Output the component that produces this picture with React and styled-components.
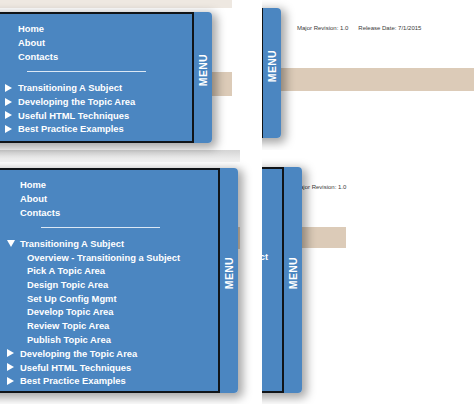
import styled, { createGlobalStyle } from 'styled-components'

const GlobalStyle = createGlobalStyle`
  html, body {
    margin: 0;
    padding: 0;
    background: #ffffff;
  }
  body {
    font-family: "Liberation Sans", Arial, sans-serif;
  }
`

const Canvas = styled.div`
  width: 474px;
  height: 404px;
  overflow: hidden;
  background: #ffffff;
  display: grid;
  grid-template-columns: 240px 22px 212px;
  grid-template-rows: 150px 254px;
  grid-template-areas:
    "a . b"
    "c . d";
`

const Shot = styled.div`
  grid-area: ${props => props.$area};
  position: relative;
  width: ${props => props.$width}px;
  overflow: ${props => (props.$clip ? 'hidden' : 'visible')};
`

const Page = styled.div`
  padding-top: ${props => props.$top || 0}px;
`

const Strip = styled.div`
  height: ${props => props.$h}px;
  background: ${props => props.$bg};
`

const Meta = styled.div`
  display: flex;
  gap: 10px;
  padding-left: ${props => props.$indent}px;
  font-size: 6px;
  line-height: 8px;
  color: #3a3a3a;
  white-space: nowrap;
`

const Band = styled.div`
  height: ${props => props.$h}px;
  margin-top: ${props => props.$gap}px;
  width: ${props => (props.$w ? `${props.$w}px` : '100%')};
  background: #dccbb8;
`

const Menu = styled.nav`
  position: absolute;
  z-index: 2;
  left: ${props => props.$left}px;
  top: ${props => props.$top}px;
  height: ${props => props.$h}px;
  display: flex;
  border-radius: 0 4px 4px 0;
  box-shadow: 3px 3px 10px 2px rgba(0, 0, 0, 0.35);
  font-family: "Liberation Sans", Arial, sans-serif;
  font-weight: bold;
  font-size: 9.4px;
  color: #ffffff;
`

const Panel = styled.div`
  box-sizing: border-box;
  width: ${props => props.$w}px;
  height: 100%;
  background: #4b86c1;
  border: 2px solid #101418;
  border-left: 0;
  padding-top: 8px;
  white-space: nowrap;
  overflow: hidden;
`

const Links = styled.ul`
  list-style: none;
  margin: 0;
  padding: 0 0 0 38px;
`

const Link = styled.li`
  height: 14px;
  line-height: 14px;
`

const Rule = styled.hr`
  width: 119px;
  height: 1px;
  margin: 7px auto 9px;
  border: 0;
  background: #dbe8f5;
`

const Tree = styled.ul`
  list-style: none;
  margin: 0;
  padding: 0 0 0 25px;
`

const BranchLabel = styled.div`
  display: flex;
  align-items: center;
  height: 13.7px;
`

const Caret = styled.span`
  width: 13px;
  display: flex;
  align-items: center;
`

const Leaves = styled.ul`
  list-style: none;
  margin: 0;
  padding: 0 0 0 20px;
`

const Leaf = styled.li`
  height: 13.7px;
  line-height: 13.7px;
`

const Tab = styled.div`
  box-sizing: border-box;
  width: 18px;
  height: 100%;
  background: #4b86c1;
  border-radius: 0 4px 4px 0;
  display: flex;
  align-items: center;
  justify-content: center;
  padding-bottom: 14px;
`

const TabLabel = styled.span`
  writing-mode: vertical-rl;
  transform: rotate(180deg);
  font-size: 10.5px;
  font-weight: bold;
  letter-spacing: 0.3px;
`

const sections = [
  {
    title: 'Transitioning A Subject',
    pages: [
      'Overview - Transitioning a Subject',
      'Pick A Topic Area',
      'Design Topic Area',
      'Set Up Config Mgmt',
      'Develop Topic Area',
      'Review Topic Area',
      'Publish Topic Area',
    ],
  },
  { title: 'Developing the Topic Area', pages: [] },
  { title: 'Useful HTML Techniques', pages: [] },
  { title: 'Best Practice Examples', pages: [] },
]

const Arrow = ({ open }) =>
  open ? (
    <svg width="8" height="7" viewBox="0 0 8 7">
      <polygon points="0,0 8,0 4,7" fill="#fff" />
    </svg>
  ) : (
    <svg width="7" height="8" viewBox="0 0 7 8">
      <polygon points="0,0 7,4 0,8" fill="#fff" />
    </svg>
  )

const SlideMenu = ({ left, top, height, width, expanded }) => (
  <Menu $left={left} $top={top} $h={height}>
    <Panel $w={width}>
      <Links>
        <Link>Home</Link>
        <Link>About</Link>
        <Link>Contacts</Link>
      </Links>
      <Rule />
      <Tree>
        {sections.map((section, i) => {
          const open = expanded && i === 0
          return (
            <li key={section.title}>
              <BranchLabel>
                <Caret>
                  <Arrow open={open} />
                </Caret>
                {section.title}
              </BranchLabel>
              {open && (
                <Leaves>
                  {section.pages.map(page => (
                    <Leaf key={page}>{page}</Leaf>
                  ))}
                </Leaves>
              )}
            </li>
          )
        })}
      </Tree>
    </Panel>
    <Tab>
      <TabLabel>MENU</TabLabel>
    </Tab>
  </Menu>
)

export default function App() {
  return (
    <>
      <GlobalStyle />
      <Canvas>
        <Shot $area="a" $width={232}>
          <Page>
            <Strip $h={8} $bg="#eee8e1" />
            <Band $h={24} $gap={64} />
          </Page>
          <SlideMenu left={-20} top={12} height={131} width={214} />
        </Shot>

        <Shot $area="b" $width={212} $clip>
          <Page $top={24}>
            <Meta $indent={35}>
              <span>Major Revision: 1.0</span>
              <span>Release Date: 7/1/2015</span>
            </Meta>
            <Band $h={23} $gap={36} />
          </Page>
          <SlideMenu left={-213} top={8} height={130} width={214} />
        </Shot>

        <Shot $area="c" $width={240}>
          <Page>
            <Strip $h={12} $bg="linear-gradient(to bottom, #d4d4d4, #f4f4f4)" />
            <Band $h={22} $gap={65} />
          </Page>
          <SlideMenu left={-18} top={18} height={225} width={238} expanded />
        </Shot>

        <Shot $area="d" $width={212} $clip>
          <Page $top={33}>
            <Meta $indent={33}>
              <span>Major Revision: 1.0</span>
            </Meta>
            <Band $h={21} $gap={36} $w={84} />
          </Page>
          <SlideMenu left={-192} top={17} height={226} width={214} expanded />
        </Shot>
      </Canvas>
    </>
  )
}
